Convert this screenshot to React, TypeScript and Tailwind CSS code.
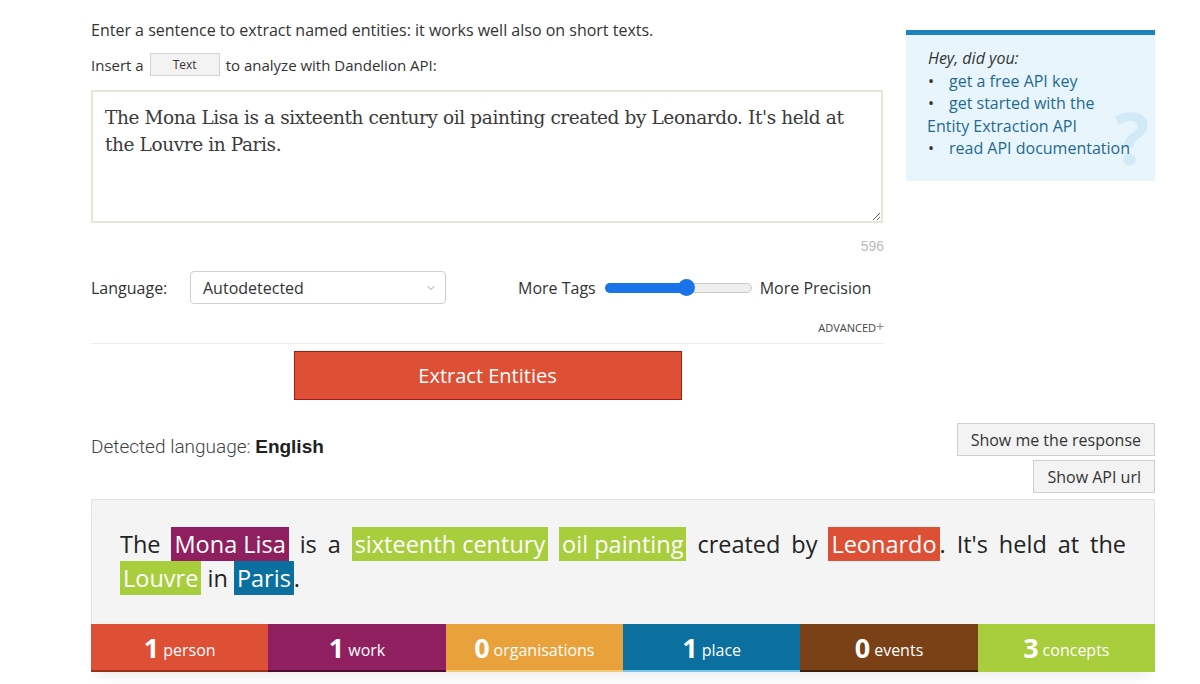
import { ChevronDown } from 'lucide-react'

const entities = [
  { n: 1, label: 'person', bg: 'bg-[#dd5035]', border: 'border-[#9e2f1b]' },
  { n: 1, label: 'work', bg: 'bg-[#8f1f5e]', border: 'border-[#4f0a31]' },
  { n: 0, label: 'organisations', bg: 'bg-[#e9a23b]', border: 'border-[#f3c97a]' },
  { n: 1, label: 'place', bg: 'bg-[#0b6fa0]', border: 'border-[#7cc3ea]' },
  { n: 0, label: 'events', bg: 'bg-[#7a4117]', border: 'border-[#3d1e08]' },
  { n: 3, label: 'concepts', bg: 'bg-[#a8cd3d]', border: 'border-[#a8cd3d]' },
]

function Tag({ children, color }: { children: React.ReactNode; color: string }) {
  return <span className={`${color} inline-block text-white px-[3px] leading-[34px]`}>{children}</span>
}

export default function App() {
  return (
    <div className="min-h-[684px] bg-white text-[#333] font-['Open_Sans',sans-serif]">
      <div className="ml-[91px] w-[1064px] pt-[19px] flex gap-[22px]">
        {/* Main column */}
        <div className="w-[793px] shrink-0">
          <p className="text-[16px] leading-[22px]">Enter a sentence to extract named entities: it works well also on short texts.</p>
          <div className="mt-[12px] flex items-center text-[15px] leading-[22px]">
            <span>Insert a</span>
            <span className="ml-[6px] mr-[6px] w-[70px] h-[23px] flex items-center justify-center bg-[#f3f3f3] border border-[#d4d4d4] text-[12px]">Text</span>
            <span>to analyze with Dandelion API:</span>
          </div>

          <textarea
            readOnly
            defaultValue="The Mona Lisa is a sixteenth century oil painting created by Leonardo. It's held at the Louvre in Paris."
            className="mt-[14px] block w-[792px] h-[133px] border-2 border-[#e7e7d8] px-[12px] py-[12px] font-['DejaVu_Serif',serif] text-[18.5px] leading-[27px] text-[#3a3a3a] tracking-[-0.4px] outline-none"
          />
          <div className="text-right text-[14px] text-[#bbb] font-['Liberation_Sans_Narrow','Liberation_Sans',sans-serif] mt-[13px] leading-[20px]">596</div>

          <div className="mt-[15px] flex items-center text-[16px]">
            <span className="w-[99px]">Language:</span>
            <div className="w-[256px] h-[33px] border border-[#cfcfcf] rounded-[4px] flex items-center justify-between pl-[12px] pr-[8px]">
              <span className="text-[16px]">Autodetected</span>
              <ChevronDown className="w-[12px] h-[12px] text-[#777]" strokeWidth={1.5} />
            </div>
            <span className="ml-[72px]">More Tags</span>
            <div className="ml-[9px] relative w-[147px] h-[10px] rounded-full bg-[#efefef] border border-[#c9c9c9]">
              <div className="absolute left-[-1px] top-[-1px] h-[10px] w-[82px] rounded-full bg-[#1a73e8]" />
              <div className="absolute left-[72px] top-[-5px] w-[17px] h-[17px] rounded-full bg-[#1a73e8]" />
            </div>
            <span className="ml-[8px]">More Precision</span>
          </div>

          <div className="mt-[16px] text-right text-[11px] leading-[14px] text-[#444]">
            ADVANCED<span className="text-[14px] text-[#888]">+</span>
          </div>
          <div className="mt-[8px] border-t border-[#f0ece8]" />

          <div className="mt-[7px] flex justify-center">
            <button className="w-[388px] h-[49px] bg-[#dd5035] border border-[#a11b10] text-white text-[20px]">Extract Entities</button>
          </div>
        </div>

        {/* Sidebar */}
        <div className="w-[249px] mt-[11px] h-[151px] bg-[#e8f5fc] border-t-[5px] border-[#1d83bf] relative pl-[22px] pt-[12px] text-[16px] leading-[22.5px] after:content-['?'] after:absolute after:right-[6px] after:top-[62px] after:text-[72px] after:font-bold after:leading-[80px] after:text-[#d2e9f7]">
          <div className="relative z-10 italic text-[#333]">Hey, did you:</div>
          <ul className="relative z-10 text-[#1e6a92]">
            <li className="flex"><span className="text-[#333] w-[21px]">•</span>get a free API key</li>
            <li className="flex"><span className="text-[#333] w-[21px]">•</span>get started with the</li>
            <li className="-ml-[1px]">Entity Extraction API</li>
            <li className="flex"><span className="text-[#333] w-[21px]">•</span>read API documentation</li>
          </ul>
        </div>
      </div>

      {/* Results */}
      <div className="ml-[91px] w-[1064px] mt-[23px] flex justify-between">
        <div className="mt-[10px] text-[19px] font-['Roboto',sans-serif] font-light text-[#444]">
          Detected language: <span className="font-['Liberation_Sans',sans-serif] font-bold text-[#222]">English</span>
        </div>
        <div className="flex flex-col items-end gap-[4px]">
          <button className="h-[33px] px-[13px] bg-[#f3f3f3] border border-[#cfcfcf] text-[16px]">Show me the response</button>
          <button className="h-[33px] px-[13px] bg-[#f3f3f3] border border-[#cfcfcf] text-[16px]">Show API url</button>
        </div>
      </div>

      <div className="ml-[91px] w-[1064px] mt-[6px] shadow-[0_10px_12px_-6px_rgba(0,0,0,0.08)]">
        <div className="bg-[#f4f4f4] border border-[#e2e2e2] border-b-0 px-[28px] pt-[27px] pb-[29px] text-[23.5px] leading-[34px] text-justify [text-align-last:left] text-[#222]">
          The <Tag color="bg-[#8f1f5e]">Mona Lisa</Tag> is a <Tag color="bg-[#a8cd3d]">sixteenth century</Tag>{' '}
          <Tag color="bg-[#a8cd3d]">oil painting</Tag> created by <Tag color="bg-[#dd5035]">Leonardo</Tag>. It's held at the{' '}
          <Tag color="bg-[#a8cd3d]">Louvre</Tag> in <Tag color="bg-[#0b6fa0]">Paris</Tag>.
        </div>
        <div className="grid grid-cols-6">
          {entities.map((e) => (
            <div key={e.label} className={`${e.bg} ${e.border} border-b-2 h-[48px] flex items-center justify-center text-white`}>
              <span className="text-[27px] font-bold leading-none">{e.n}</span>
              <span className="ml-[4px] mt-[6px] text-[16px] leading-none">{e.label}</span>
            </div>
          ))}
        </div>
      </div>
    </div>
  )
}
